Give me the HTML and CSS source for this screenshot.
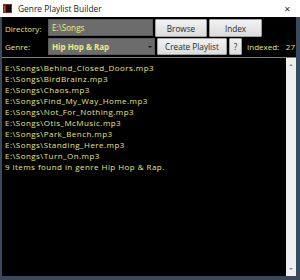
FILE: index.html
```html
<!DOCTYPE html>
<html>
<head>
<meta charset="utf-8">
<link rel="stylesheet" href="styles.css">
</head>
<body>
<div class="window">
  <div class="titlebar">
    <svg class="appicon" width="9" height="9" viewBox="0 0 9 9">
      <rect x="0" y="0" width="9" height="9" fill="#8a2a18"/>
      <rect x="3" y="1" width="5" height="7" fill="#140605"/>
      <rect x="1" y="2" width="1" height="6" fill="#c04a2a"/>
    </svg>
    <span class="title">Genre Playlist Builder</span>
    <span class="close">✕</span>
  </div>
  <div class="body">
    <div class="row row1">
      <span class="label lead">Directory:</span>
      <div class="textbox">E:\Songs</div>
      <button class="btn browse">Browse</button>
      <button class="btn index">Index</button>
    </div>
    <div class="row row2">
      <span class="label lead">Genre:</span>
      <div class="combo"><span>Hip Hop &amp; Rap</span><span class="arrow"></span></div>
      <button class="btn create">Create Playlist</button>
      <button class="btn help">?</button>
      <span class="label indexed">Indexed:</span>
      <span class="label count">27</span>
    </div>
    <div class="list">
      <div class="items">
        <div>E:\Songs\Behind_Closed_Doors.mp3</div>
        <div>E:\Songs\BirdBrainz.mp3</div>
        <div>E:\Songs\Chaos.mp3</div>
        <div>E:\Songs\Find_My_Way_Home.mp3</div>
        <div>E:\Songs\Not_For_Nothing.mp3</div>
        <div>E:\Songs\Otis_McMusic.mp3</div>
        <div>E:\Songs\Park_Bench.mp3</div>
        <div>E:\Songs\Standing_Here.mp3</div>
        <div>E:\Songs\Turn_On.mp3</div>
        <div>9 items found in genre Hip Hop &amp; Rap.</div>
      </div>
      <div class="scrollbar">
        <span class="up"></span>
        <span class="down"></span>
      </div>
    </div>
  </div>
</div>
</body>
</html>
```

FILE: styles.css
```css
* { box-sizing: border-box; }
html, body { margin: 0; padding: 0; background: #fff; }
body { font-family: "Open Sans", "Noto Sans", sans-serif; }
.window {
  width: 300px; height: 280px;
  display: flex; flex-direction: column;
  background: #3a4a5d;
}
.titlebar {
  height: 17px; flex: none; background: #fff;
  display: flex; align-items: center;
  padding-left: 3px;
}
.appicon { display: block; }
.title { margin-left: 6px; font-size: 8.4px; color: #1a1a1a; }
.close { margin-left: auto; margin-right: 9px; font-size: 8px; color: #333; }
.body {
  flex: 1; background: #000;
  margin: 0 4px 4px 2px;
  display: flex; flex-direction: column;
  padding: 2px 0 0 3px;
}
.row { display: flex; align-items: center; }
.row1 { height: 18px; }
.row2 { height: 17px; margin-top: 1px; }
.label { color: #e6e67c; font-size: 8px; white-space: nowrap; }
.lead { width: 43px; }
.textbox {
  width: 105px; height: 17px; align-self: flex-start;
  background: #6c6c6c; border: 1px solid #5a5a5a;
  color: #ecec80; font-size: 8.2px;
  padding-left: 3px; line-height: 15px;
}
.btn {
  font-family: inherit; font-size: 8.2px; color: #2a2a2a;
  height: 18px; padding: 0;
  background: linear-gradient(#f2f2f2, #dcdcdc);
  border: 1px solid #a0a0a0; border-radius: 1px;
}
.browse { width: 52px; margin-left: 2px; }
.index { width: 53px; margin-left: 2px; }
.combo {
  width: 107px; height: 17px;
  background: #6c6c6c; border: 1px solid #5a5a5a;
  color: #ecec80; font-size: 8px; font-weight: bold;
  padding-left: 3px; display: flex; align-items: center;
}
.arrow {
  margin-left: auto; margin-right: 2px;
  width: 0; height: 0;
  border-left: 2px solid transparent; border-right: 2px solid transparent;
  border-top: 2px solid #111;
}
.row2 .btn { height: 17px; }
.create { width: 70px; margin-left: 2px; }
.help { width: 13px; margin-left: 2px; }
.indexed { margin-left: 5px; }
.count { margin-left: auto; margin-right: 1px; }
.list {
  flex: 1; margin: 2px 0 0 -3px;
  border-top: 1px solid #808080;
  display: flex;
}
.items {
  flex: 1; color: #e6e67c; font-size: 8px; letter-spacing: 0.45px;
  line-height: 11px; padding: 4px 0 0 3px;
  white-space: nowrap;
}
.scrollbar {
  width: 10px; background: #efefef;
  display: flex; flex-direction: column; justify-content: space-between;
  align-items: center; padding: 6px 0 6px;
}
.up, .down { width: 0; height: 0; border-left: 2px solid transparent; border-right: 2px solid transparent; }
.up { border-bottom: 2px solid #8a8a8a; }
.down { border-top: 2px solid #8a8a8a; }
```
